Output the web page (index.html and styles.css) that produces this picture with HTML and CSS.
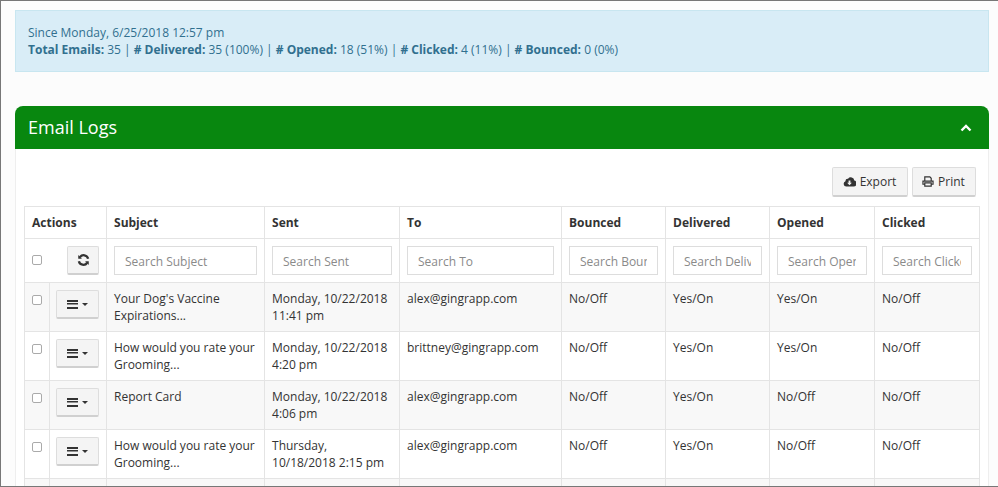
FILE: index.html
```html
<!DOCTYPE html>
<html lang="en">
  <head>
    <meta charset="UTF-8" />
    <title>Email Logs</title>
    <link rel="stylesheet" href="styles.css">
  </head>
  <body>
    <div class="page">
      <div class="alert">
        <div>Since Monday, 6/25/2018 12:57 pm</div>
        <div><b>Total Emails:</b> 35 | <b># Delivered:</b> 35 (100%) | <b># Opened:</b> 18 (51%) | <b># Clicked:</b> 4 (11%) | <b># Bounced:</b> 0 (0%)</div>
      </div>

      <div class="panel">
        <div class="panel_head">
          <h2>Email Logs</h2>
          <svg class="chevron" width="12" height="8" viewBox="0 0 12 8"><path d="M1.500 6.500 6 2l4.500 4.500" fill="none" stroke="#fff" stroke-width="2.400"/></svg>
        </div>
        <div class="panel_body">
          <div class="toolbar">
            <button class="btn btn_export">
              <svg width="13" height="11" viewBox="0 0 14 12"><path d="M3.400 11.500A3 3 0 0 1 2.600 5.700 2.600 2.600 0 0 1 5.400 3 3.800 3.800 0 0 1 12.200 5a3.300 3.300 0 0 1-1 6.500Z" fill="#333"/><path d="M6 5h2v2.400h1.600L7 10 4.400 7.400H6Z" fill="#f2f2f2"/></svg>
              Export
            </button>
            <button class="btn btn_print">
              <svg width="12" height="11" viewBox="0 0 13 12"><path d="M3 5V1h5.500L10 2.500V5M3 9H1V5.500h11V9h-2M3 7.500h7V11H3Z" fill="none" stroke="#333" stroke-width="1.300"/></svg>
              Print
            </button>
          </div>

          <table class="logs">
            <colgroup>
              <col class="c_check"><col class="c_menu"><col class="c_subject"><col class="c_sent"><col class="c_to">
              <col class="c_status"><col class="c_status"><col class="c_wide"><col class="c_wide">
            </colgroup>
            <thead>
              <tr class="head_row">
                <th colspan="2">Actions</th>
                <th>Subject</th>
                <th>Sent</th>
                <th>To</th>
                <th>Bounced</th>
                <th>Delivered</th>
                <th>Opened</th>
                <th>Clicked</th>
              </tr>
              <tr class="search_row">
                <td colspan="2">
                  <div class="search_actions">
                    <input type="checkbox" class="check check_top">
                    <button class="btn btn_icon">
                      <svg width="13" height="12" viewBox="0 0 14 13"><path d="M12 5.200A5 5 0 0 0 3 3.500M2 7.800A5 5 0 0 0 11 9.500" fill="none" stroke="#333" stroke-width="2.500"/><path d="M1.300 1.200v4h4ZM12.700 11.800v-4h-4Z" fill="#333"/></svg>
                    </button>
                  </div>
                </td>
                <td><input class="search" placeholder="Search Subject"></td>
                <td><input class="search" placeholder="Search Sent"></td>
                <td><input class="search" placeholder="Search To"></td>
                <td><input class="search" placeholder="Search Bounced"></td>
                <td><input class="search" placeholder="Search Delivered"></td>
                <td><input class="search" placeholder="Search Opened"></td>
                <td><input class="search" placeholder="Search Clicked"></td>
              </tr>
            </thead>
            <tbody>
              <tr class="odd">
                <td class="cell_check"><input type="checkbox" class="check"></td>
                <td class="cell_menu"><button class="btn btn_menu"><span class="bars"></span><span class="caret"></span></button></td>
                <td>Your Dog's Vaccine Expirations...</td>
                <td>Monday, 10/22/2018 11:41 pm</td>
                <td>alex@gingrapp.com</td>
                <td>No/Off</td><td>Yes/On</td><td>Yes/On</td><td>No/Off</td>
              </tr>
              <tr>
                <td class="cell_check"><input type="checkbox" class="check"></td>
                <td class="cell_menu"><button class="btn btn_menu"><span class="bars"></span><span class="caret"></span></button></td>
                <td>How would you rate your Grooming...</td>
                <td>Monday, 10/22/2018 4:20 pm</td>
                <td>brittney@gingrapp.com</td>
                <td>No/Off</td><td>Yes/On</td><td>Yes/On</td><td>No/Off</td>
              </tr>
              <tr class="odd">
                <td class="cell_check"><input type="checkbox" class="check"></td>
                <td class="cell_menu"><button class="btn btn_menu"><span class="bars"></span><span class="caret"></span></button></td>
                <td>Report Card</td>
                <td>Monday, 10/22/2018 4:06 pm</td>
                <td>alex@gingrapp.com</td>
                <td>No/Off</td><td>Yes/On</td><td>No/Off</td><td>No/Off</td>
              </tr>
              <tr>
                <td class="cell_check"><input type="checkbox" class="check"></td>
                <td class="cell_menu"><button class="btn btn_menu"><span class="bars"></span><span class="caret"></span></button></td>
                <td>How would you rate your Grooming...</td>
                <td>Thursday, 10/18/2018 2:15 pm</td>
                <td>alex@gingrapp.com</td>
                <td>No/Off</td><td>Yes/On</td><td>No/Off</td><td>No/Off</td>
              </tr>
              <tr class="odd">
                <td class="cell_check"><input type="checkbox" class="check"></td>
                <td class="cell_menu"><button class="btn btn_menu"><span class="bars"></span><span class="caret"></span></button></td>
                <td></td><td></td><td></td><td></td><td></td><td></td><td></td>
              </tr>
            </tbody>
          </table>
        </div>
      </div>
    </div>
  </body>
</html>
```

FILE: styles.css
```css
* {
  box-sizing: border-box;
}

html,
body {
  margin: 0;
  height: 487px;
  overflow: hidden;
}

body {
  font-family: "Open Sans", sans-serif;
  font-size: 12px;
  line-height: 17px;
  color: #333;
}

.page {
  height: 487px;
  padding: 9px 9px 0 14px;
  background: #fcfcfc;
  border: 1px solid #777;
  border-right: 0;
  overflow: hidden;
}

.alert {
  height: 62px;
  padding: 13px 12px;
  background: #d9edf7;
  border: 1px solid #c8e6f0;
  color: #31708f;
}

.panel {
  margin-top: 34px;
}

.panel_head {
  display: flex;
  justify-content: space-between;
  align-items: center;
  height: 43px;
  padding: 0 17px 0 13px;
  background: #08870f;
  border-radius: 8px 8px 0 0;
  color: #fff;
}

.panel_head h2 {
  margin: 0;
  font-size: 18px;
  font-weight: 500;
}

.panel_body {
  padding: 18px 8px 0;
  background: #fff;
  border-left: 1px solid #eee;
  border-right: 1px solid #eee;
}

.toolbar {
  display: flex;
  justify-content: flex-end;
  gap: 4px;
  margin-right: 4px;
  margin-bottom: 9px;
}

.btn {
  display: inline-flex;
  align-items: center;
  justify-content: center;
  height: 30px;
  padding: 0;
  background: #f4f4f4;
  border: 1px solid #ddd;
  border-bottom: 2px solid #d0d0d0;
  border-radius: 2px;
  font: inherit;
  color: #333;
}

.btn_export {
  width: 76px;
  gap: 4px;
  padding-right: 1px;
}

.btn_print {
  width: 64px;
  gap: 4px;
  padding-right: 1px;
}

.btn_icon {
  width: 32px;
  height: 29px;
}

.btn_menu {
  width: 43px;
  height: 29px;
  gap: 4px;
}

.bars {
  width: 11px;
  height: 9px;
  border-top: 2px solid #333;
  border-bottom: 2px solid #333;
  background: linear-gradient(#333, #333) center / 100% 1.5px no-repeat;
}

.caret {
  border-top: 3px solid #333;
  border-left: 3px solid transparent;
  border-right: 3px solid transparent;
}

.logs {
  width: 955px;
  table-layout: fixed;
  border-collapse: collapse;
  background: #fff;
}

.c_check { width: 25px; }
.c_menu { width: 57px; }
.c_subject { width: 158px; }
.c_sent { width: 135px; }
.c_to { width: 162px; }
.c_status { width: 104px; }
.c_wide { width: 105px; }

.logs th,
.logs td {
  padding: 7px;
  border: 1px solid #e4e4e4;
  text-align: left;
  vertical-align: top;
}

.head_row th {
  height: 32px;
  font-weight: 700;
}

.search_row td {
  height: 44px;
}

.search_actions {
  display: flex;
  justify-content: space-between;
  align-items: flex-start;
}

.search {
  display: block;
  width: 100%;
  height: 29px;
  padding: 1px 10px 0;
  border: 1px solid #ddd;
  font: inherit;
  color: #333;
}

.search::placeholder {
  color: #8a8a8a;
}

.check {
  display: block;
  appearance: none;
  width: 10px;
  height: 10px;
  margin: 5px 0 0;
  background: #fff;
  border: 1px solid #aaa;
  border-radius: 2px;
}

.check_top {
  margin-top: 9px;
}

.logs tbody tr {
  height: 49px;
}

.logs .odd td {
  background: #f8f8f8;
}

.logs .cell_menu {
  padding: 7px 7px 0 6px;
}
```
